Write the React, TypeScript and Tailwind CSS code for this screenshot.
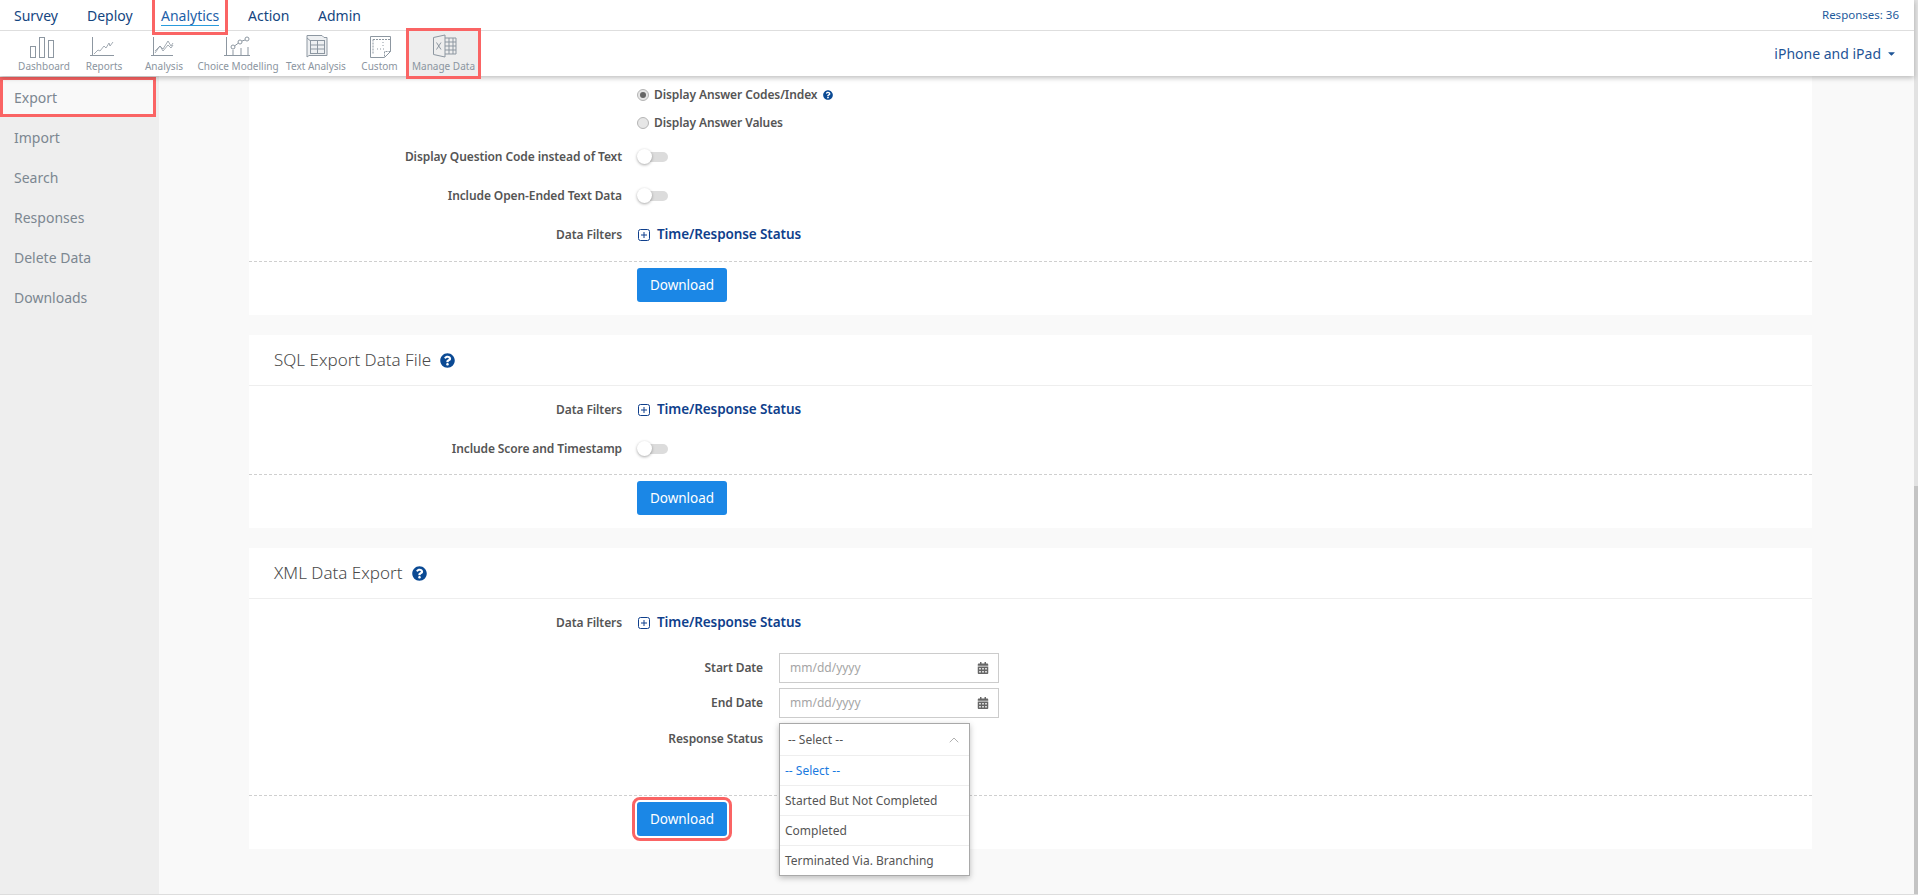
import React from "react";
import { FaQuestionCircle, FaCalendarAlt, FaCaretDown } from "react-icons/fa";
import { ChevronUp } from "lucide-react";

const Ic = ({ children }: { children: React.ReactNode }) => (
  <svg width="34" height="24" viewBox="0 0 34 24" fill="none" stroke="#8d97a1" strokeWidth="1" className="block">
    {children}
  </svg>
);

const icons: Record<string, React.ReactNode> = {
  Dashboard: (
    <Ic>
      <rect x="3.5" y="12.5" width="5" height="11" />
      <rect x="12.5" y="3.5" width="5" height="20" />
      <rect x="21.5" y="6.5" width="5" height="17" />
    </Ic>
  ),
  Reports: (
    <Ic>
      <path d="M5.5 3v19M3 21.5h24" />
      <path d="M7 20l4-4 2 1 4-5 2 2 3-5 1 3 3-4" strokeWidth="0.8" />
    </Ic>
  ),
  Analysis: (
    <Ic>
      <path d="M6.5 3v19M4 21.5h22" />
      <path d="M8 19l5-7 3 3 5-8 3 5 2-3M8 17l5-5 3 5 5-6 3 3 2-3" strokeWidth="0.8" />
    </Ic>
  ),
  "Choice Modelling": (
    <Ic>
      <path d="M5.5 3v19M3 21.5h26" />
      <path d="M12 21v-5M20 21v-7M27 21v-8" />
      <circle cx="12" cy="13" r="2" />
      <circle cx="19" cy="8" r="2" />
      <circle cx="26" cy="5" r="2" />
      <path d="M13.5 12l4-3M21 7l3-1" />
    </Ic>
  ),
  "Text Analysis": (
    <Ic>
      <path d="M8 4V1.5h15l2 2H28v18H10l-2 1.5V4z" fill="#eef0f2" />
      <rect x="11.5" y="6.5" width="14" height="13" />
      <path d="M11.5 11h14M11.5 15h14M18.5 6.5v13" />
      <path d="M8 4l3 2.5" />
    </Ic>
  ),
  Custom: (
    <Ic>
      <path d="M7.5 2.5h20v15l-6 6h-14z" />
      <path d="M27.5 17.5h-6v6M10 5.5h17M10 5.5v15" strokeDasharray="2 1" />
      <path d="M14 15h1M17 15h1M20 15h1M20 11v1M20 8v1" />
    </Ic>
  ),
  "Manage Data": (
    <Ic>
      <path d="M18 1L6.5 3.5v17L18 23z" />
      <path d="M18 4h11v16H18M18 8h11M18 12h11M18 16h11M22 4v16M26 4v16" />
      <path d="M9.5 8.5l4.5 7M14 8.5l-4.5 7" />
    </Ic>
  ),
};

const subnav: [string, string][] = [
  ["Dashboard", "w-[60px]"],
  ["Reports", "w-[60px]"],
  ["Analysis", "w-[60px]"],
  ["Choice Modelling", "w-[88px]"],
  ["Text Analysis", "w-[68px]"],
  ["Custom", "w-[59px]"],
];

const Help = ({ size }: { size: number }) => <FaQuestionCircle size={size} color="#0b4a94" className="shrink-0" />;

const Toggle = () => (
  <div className="relative h-[10px] w-[27px] ml-[4px] rounded-full bg-[#dcdcdc]">
    <div className="absolute left-[-4px] top-[-3px] h-[15px] w-[15px] rounded-full bg-white shadow-[0_1px_3px_rgba(0,0,0,0.35)]" />
  </div>
);

const Row = ({ label, children }: { label: string; children: React.ReactNode }) => (
  <div className="flex h-[39px] items-center">
    <div className="w-[373px] text-right text-[12px] font-semibold tracking-[-0.1px] text-[#555]">{label}</div>
    <div className="ml-[15px] flex items-center">{children}</div>
  </div>
);

const Filter = ({ open }: { open?: boolean }) => (
  <Row label="Data Filters">
    <svg width="12" height="12" viewBox="0 0 12 12" fill="none" stroke="#0f3f8c" strokeWidth="1" className="ml-[1px]">
      <rect x="0.5" y="0.5" width="11" height="11" rx="2" />
      <path d={open ? "M3 6h6" : "M3 6h6M6 3v6"} />
    </svg>
    <span className="ml-[7px] text-[13.5px] font-semibold tracking-[-0.1px] text-[#0f3f8c]">Time/Response Status</span>
  </Row>
);

const Footer = ({ marked }: { marked?: boolean }) => (
  <div className="border-t border-dashed border-[#cfcfcf] pl-[388px] pt-[6px] pb-[13px]">
    <button
      className={
        "block h-[34px] w-[90px] rounded-[3px] bg-[#1b87e6] text-[13.5px] text-white " +
        (marked ? "outline-3 outline-offset-2 outline-[#fa6464]" : "")
      }
    >
      Download
    </button>
  </div>
);

const CardHead = ({ title, help }: { title: string; help: number }) => (
  <div className="flex h-[51px] items-center gap-[9px] border-b border-[#eeeeee] pl-[25px]">
    <span className="text-[17px] font-light text-[#4a4a4a]">{title}</span>
    <Help size={help} />
  </div>
);

const Radio = ({ checked, label }: { checked?: boolean; label: string }) => (
  <div className="flex h-[28px] items-center pl-[388px]">
    <div className="flex h-[12px] w-[12px] items-center justify-center rounded-full border border-[#b5b5b5] bg-[#e6e6e6]">
      {checked && <div className="h-[6px] w-[6px] rounded-full bg-[#666]" />}
    </div>
    <span className="ml-[5px] text-[12px] font-semibold tracking-[-0.1px] text-[#555]">{label}</span>
    {checked && (
      <span className="ml-[6px]">
        <Help size={10} />
      </span>
    )}
  </div>
);

const DateRow = ({ label }: { label: string }) => (
  <div className="flex h-[30px] items-center">
    <div className="w-[514px] text-right text-[12px] font-semibold tracking-[-0.1px] text-[#555]">{label}</div>
    <div className="ml-[16px] flex h-[30px] w-[220px] items-center justify-between border border-[#cccccc] pl-[10px] pr-[9px] text-[12px] text-[#a5a5a5]">
      <span>mm/dd/yyyy</span>
      <FaCalendarAlt size={12} color="#666" />
    </div>
  </div>
);

const options = ["-- Select --", "Started But Not Completed", "Completed", "Terminated Via. Branching"];

export default function App() {
  return (
    <div className="flex h-[895px] w-full overflow-hidden border-b border-[#dddddd] bg-[#f9f9f9] font-['Noto_Sans','Open_Sans',sans-serif]">
      <div className="flex min-w-0 flex-1 flex-col">
        <header className="relative z-10 bg-white shadow-[0_2px_5px_rgba(0,0,0,0.25)]">
          <div className="flex h-[31px] items-center justify-between border-b border-[#dedede] pl-[14px] pr-[15px] text-[14px] text-[#14457f]">
            <nav className="flex">
              <a className="w-[73px]">Survey</a>
              <a className="w-[74px]">Deploy</a>
              <a className="w-[87px]">
                <span className="relative border-b border-[#2a9bdc] text-[#1d5fa8] outline-3 outline-offset-[6px] outline-[#fa6464]">
                  Analytics
                </span>
              </a>
              <a className="w-[70px]">Action</a>
              <a>Admin</a>
            </nav>
            <span className="text-[11.5px] text-[#1d5a9c]">Responses: 36</span>
          </div>
          <div className="flex h-[45px] items-stretch justify-between pl-[14px] pr-[17px]">
            <div className="flex">
              {subnav.map(([name, w]) => (
                <div key={name} className={w + " flex flex-col items-center pt-[3px]"}>
                  {icons[name]}
                  <span className="mt-[1px] whitespace-nowrap text-[10px] leading-[14px] text-[#8b95a0]">{name}</span>
                </div>
              ))}
              <div className="flex w-[69px] flex-col items-center bg-[#eeeeee] pt-[3px] outline-3 outline-[#fa6464]">
                {icons["Manage Data"]}
                <span className="mt-[1px] whitespace-nowrap text-[10px] leading-[14px] text-[#8b95a0]">Manage Data</span>
              </div>
            </div>
            <div className="flex items-center gap-[5px] text-[14px] text-[#1f5597]">
              iPhone and iPad
              <FaCaretDown size={11} />
            </div>
          </div>
        </header>

        <div className="flex min-h-0 flex-1">
          <aside className="w-[159px] bg-[#eeeeee] pt-[1px] text-[14px] text-[#7c8791]">
            <div className="flex h-[40px] w-[156px] items-center border-l-2 border-[#2a5caa] bg-[#f9f9f9] pl-[12px] outline-3 -outline-offset-3 outline-[#fa6464]">
              Export
            </div>
            {["Import", "Search", "Responses", "Delete Data", "Downloads"].map((t) => (
              <div key={t} className="flex h-[40px] items-center pl-[14px]">
                {t}
              </div>
            ))}
          </aside>

          <main className="flex min-w-0 flex-1 flex-col gap-[20px] pl-[90px] pr-[102px]">
            <section className="bg-white">
              <div className="pt-[5px]">
                <Radio checked label="Display Answer Codes/Index" />
                <Radio label="Display Answer Values" />
                <Row label="Display Question Code instead of Text">
                  <Toggle />
                </Row>
                <Row label="Include Open-Ended Text Data">
                  <Toggle />
                </Row>
                <Filter />
              </div>
              <div className="pt-[7px]">
                <Footer />
              </div>
            </section>

            <section className="bg-white">
              <CardHead title="SQL Export Data File" help={15} />
              <div className="pt-[4px] pb-[6px]">
                <Filter />
                <Row label="Include Score and Timestamp">
                  <Toggle />
                </Row>
              </div>
              <Footer />
            </section>

            <section className="bg-white">
              <CardHead title="XML Data Export" help={15} />
              <div className="pt-[4px]">
                <Filter />
              </div>
              <div className="flex flex-col gap-[5px] pt-[11px]">
                <DateRow label="Start Date" />
                <DateRow label="End Date" />
                <div className="flex h-[31px] items-center">
                  <div className="w-[514px] text-right text-[12px] font-semibold tracking-[-0.1px] text-[#555]">
                    Response Status
                  </div>
                  <div className="relative z-20 ml-[16px] h-[31px] w-[191px] self-start">
                    <div className="absolute left-0 top-0 w-[191px] border border-[#a9a9a9] bg-white text-[12px] text-[#555] shadow-[0_2px_6px_rgba(0,0,0,0.25)]">
                      <div className="flex h-[31px] items-center justify-between pl-[8px] pr-[7px]">
                        <span>-- Select --</span>
                        <ChevronUp size={16} strokeWidth={1} color="#888" />
                      </div>
                      {options.map((o, i) => (
                        <div
                          key={o}
                          className={
                            "flex h-[30px] items-center border-t border-[#eeeeee] pl-[5px] " +
                            (i === 0 ? "text-[#1a7ae0]" : "")
                          }
                        >
                          {o}
                        </div>
                      ))}
                    </div>
                  </div>
                </div>
              </div>
              <div className="mt-[41px]">
                <Footer marked />
              </div>
            </section>
          </main>
        </div>
      </div>
      <div className="flex w-[4px] flex-col">
        <div className="h-[486px] bg-[#e2e2e2]" />
        <div className="flex-1 bg-[#c4c4c4]" />
      </div>
    </div>
  );
}
